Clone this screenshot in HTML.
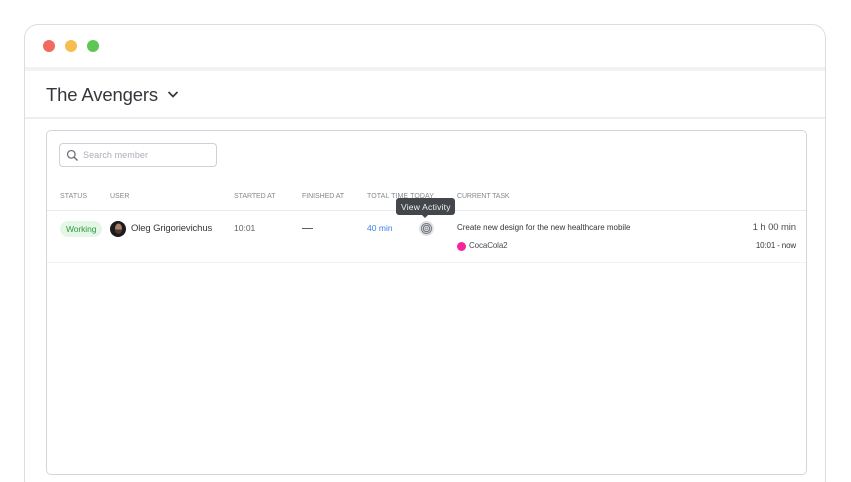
<!DOCTYPE html>
<html style="overflow:hidden;height:482px;"><head><meta charset="utf-8">
<style>
html,body{margin:0;padding:0;background:#fff;}
body{width:851px;height:482px;position:relative;overflow:hidden;font-family:"Liberation Sans",sans-serif;}
div,span{position:absolute;white-space:nowrap;box-sizing:border-box;}
.h{font-size:7px;line-height:10px;color:#85898e;top:191px;letter-spacing:0;}
.c{line-height:12px;}
</style></head><body>
<div style="left:0;top:0;width:851px;height:482px;overflow:hidden;">
<div style="left:24px;top:24px;width:802px;height:470px;border:1.5px solid #dcdde0;border-radius:14px;"></div>
<div style="left:25px;top:67px;width:800px;height:4px;background:#f2f2f3;"></div>
<div style="left:25px;top:117px;width:800px;height:2px;background:#eeeef0;"></div>
<div style="left:43px;top:40px;width:12px;height:12px;border-radius:50%;background:#f26a5f;"></div>
<div style="left:65px;top:40px;width:12px;height:12px;border-radius:50%;background:#f6bd4f;"></div>
<div style="left:87px;top:40px;width:12px;height:12px;border-radius:50%;background:#5ec653;"></div>
<div style="left:46px;top:84px;font-size:18.500px;line-height:22px;color:#34383d;letter-spacing:-.15px;">The Avengers</div>
<svg style="position:absolute;left:167px;top:90px" width="12" height="9" viewBox="0 0 12 9"><path d="M1.500 2L6 6.500L10.500 2" fill="none" stroke="#34383d" stroke-width="1.700"/></svg>

<div style="left:46px;top:130px;width:761px;height:345px;border:1px solid #d2d6db;border-radius:5px;"></div>
<div style="left:59px;top:143px;width:158px;height:24px;border:1px solid #ccd2d9;border-radius:4px;"></div>
<svg style="position:absolute;left:66px;top:149px" width="13" height="13" viewBox="0 0 13 13"><circle cx="5.300" cy="5.300" r="3.800" fill="none" stroke="#6f757b" stroke-width="1.300"/><path d="M8 8L11.500 11.500" stroke="#6f757b" stroke-width="1.500"/></svg>
<div class="c" style="left:83px;top:149px;font-size:9px;color:#a9afb6;letter-spacing:.08px;">Search member</div>

<div class="h" style="left:60px;top:191.500px;letter-spacing:.1px;">STATUS</div>
<div class="h" style="left:110px;top:191.500px;">USER</div>
<div class="h" style="left:234px;top:191.500px;letter-spacing:-.05px;">STARTED AT</div>
<div class="h" style="left:302px;top:191.500px;letter-spacing:-.05px;">FINISHED AT</div>
<div class="h" style="left:367px;top:191.500px;letter-spacing:.1px;">TOTAL TIME TODAY</div>
<div class="h" style="left:457px;top:191.500px;letter-spacing:-.1px;">CURRENT TASK</div>
<div style="left:47px;top:210px;width:759px;height:1px;background:#e6eaef;"></div>
<div style="left:47px;top:262px;width:759px;height:1px;background:#f1f2f4;"></div>

<div style="left:60px;top:221px;width:42px;height:16px;border-radius:8px;background:#e4f6e6;"></div>
<div class="c" style="left:66px;top:223px;font-size:8.500px;color:#2d9a41;letter-spacing:-.1px;">Working</div>
<svg style="position:absolute;left:110px;top:221px" width="16" height="16" viewBox="0 0 16 16"><circle cx="8" cy="8" r="8" fill="#1d1b1b"/><ellipse cx="8.500" cy="7" rx="3.400" ry="4.500" fill="#a9806b"/><path d="M5 10.500Q8.500 15 12 10.500L11 8.500L6 8.500Z" fill="#4a3a33"/></svg>
<div class="c" style="left:131px;top:223px;font-size:9.500px;color:#33373c;letter-spacing:-.12px;">Oleg Grigorievichus</div>
<div class="c" style="left:234px;top:222px;font-size:8.500px;color:#5d6267;">10:01</div>
<div style="left:302px;top:228px;width:11px;height:1px;background:#5b6066;"></div>
<div class="c" style="left:367px;top:222px;font-size:8.500px;color:#3d7fe6;letter-spacing:.03px;">40 min</div>

<svg style="position:absolute;left:419px;top:221px" width="15" height="15" viewBox="0 0 15 15"><circle cx="7.500" cy="7.500" r="7.500" fill="#dfe2e6"/><circle cx="7.500" cy="7.500" r="5" fill="none" stroke="#777c82" stroke-width="1"/><circle cx="7.500" cy="7.500" r="3.200" fill="none" stroke="#6b7076" stroke-width="1"/><circle cx="7.500" cy="7.500" r="1.400" fill="none" stroke="#8a8f95" stroke-width=".8"/></svg>
<div style="left:396px;top:198px;width:59px;height:17px;border-radius:3px;background:#43474b;"></div>
<div style="left:422px;top:215px;width:0;height:0;border-left:3.500px solid transparent;border-right:3.500px solid transparent;border-top:3.500px solid #43474b;"></div>
<div class="c" style="left:401px;top:200.500px;font-size:8.500px;color:#f1f2f3;letter-spacing:.2px;">View Activity</div>

<div class="c" style="left:457px;top:221.500px;font-size:8px;color:#33373c;letter-spacing:-.01px;">Create new design for the new healthcare mobile</div>
<div style="left:457px;top:242px;width:9px;height:9px;border-radius:50%;background:#f5259b;"></div>
<div class="c" style="left:469px;top:240px;font-size:8px;color:#4a4e53;letter-spacing:-.12px;">CocaCola2</div>
<div class="c" style="right:55px;top:222px;font-size:9.500px;color:#4b4f54;letter-spacing:-.1px;">1 h 00 min</div>
<div class="c" style="right:55px;top:240px;font-size:8px;color:#33373c;letter-spacing:-.15px;">10:01 - now</div>
</div>
</body></html>
